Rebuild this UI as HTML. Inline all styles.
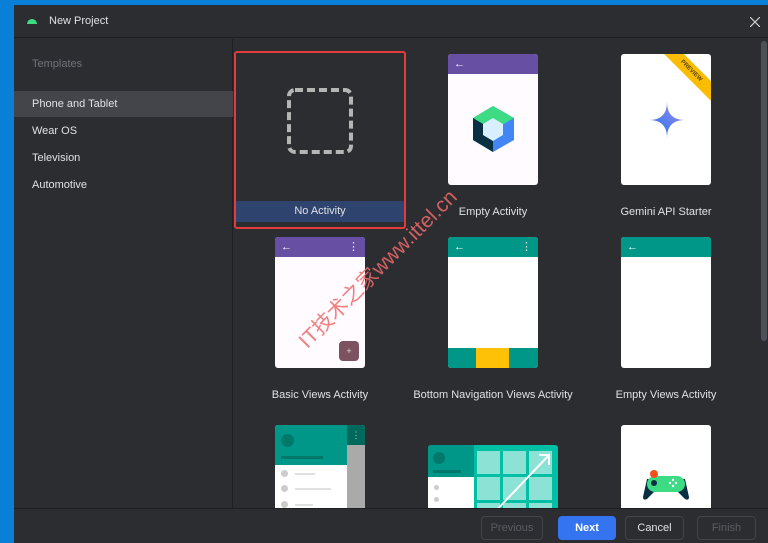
<!DOCTYPE html>
<html><head><meta charset="utf-8"><style>
*{margin:0;padding:0;box-sizing:border-box}
body{width:768px;height:543px;overflow:hidden;background:#0a7fd8;font-family:"Liberation Sans","Noto Sans CJK SC",sans-serif;position:relative}
.dlg{position:absolute;left:14px;top:5px;width:754px;height:538px;background:#2b2d30}
.title{position:absolute;left:0;top:0;width:754px;height:33px;border-bottom:1px solid #1e1f22;color:#dfe1e5;font-size:11px}
.left{position:absolute;left:0;top:34px;width:219px;height:469px;background:#2b2d30;border-right:1px solid #1e1f22}
.right{position:absolute;left:220px;top:34px;width:534px;height:469px;background:#2b2d30;overflow:hidden}
.it{position:absolute;left:18px;font-size:11px;color:#dfe1e5}
.lbl{position:absolute;font-size:11px;color:#dfe1e5;text-align:center;width:200px}
.card{position:absolute;background:#fff;border-radius:3px;overflow:hidden}
.bar{height:20px;position:relative}
.btn{position:absolute;top:511px;height:24px;border:1px solid #43454a;border-radius:4px;font-size:11px;text-align:center;line-height:22px}
</style></head><body>
<div class="dlg">
 <div class="title">
  <svg style="position:absolute;left:13px;top:12px" width="10" height="7"><path d="M0 7 A5 5 0 0 1 10 7Z" fill="#3ddc84"/></svg>
  <span style="position:absolute;left:35px;top:10px">New Project</span>
  <svg style="position:absolute;left:736px;top:12px" width="10" height="10"><path d="M0 0L10 10M10 0L0 10" stroke="#ccc" stroke-width="1.2"/></svg>
 </div>
 <div class="left">
  <div class="it" style="top:19px;color:#6f737a">Templates</div>
  <div style="position:absolute;left:0;top:52px;width:219px;height:26px;background:#43454a"></div>
  <div class="it" style="top:59px">Phone and Tablet</div>
  <div class="it" style="top:86px">Wear OS</div>
  <div class="it" style="top:113px">Television</div>
  <div class="it" style="top:140px">Automotive</div>
 </div>
 <div class="right">
  <div style="position:absolute;left:0;top:12px;width:172px;height:178px;border:2px solid #e23b3b;border-radius:3px">
   <svg style="position:absolute;left:50px;top:34px" width="68" height="68"><rect x="3" y="3" width="62" height="62" rx="6" fill="none" stroke="#b5b5b5" stroke-width="4" stroke-dasharray="8 4"/></svg>
   <div style="position:absolute;left:0;top:148px;width:168px;height:21px;background:#2e436e;color:#dfe1e5;font-size:11px;text-align:center;line-height:21px">No Activity</div>
  </div>
  <div class="card" style="left:214px;top:15px;width:90px;height:131px;background:#fffbff">
   <div class="bar" style="background:#6750a4;color:#fff;font-size:11px;padding-left:6px;line-height:20px">&#8592;</div>
   <svg style="position:absolute;left:25px;top:52px" width="41" height="46"><path d="M20 0L41 12V34L20 46L0 34V12Z" fill="#4285f4"/><path d="M20 0L41 12L20 24L0 12Z" fill="#3ddc84"/><path d="M0 12L20 24V46L0 34Z" fill="#083042"/><path d="M20 12L30 18V29L20 35L10 29V18Z" fill="#d7efff"/></svg>
  </div>
  <div class="lbl" style="left:159px;top:167px">Empty Activity</div>
  <div class="card" style="left:387px;top:15px;width:90px;height:131px">
   <div style="position:absolute;right:-20px;top:10px;width:80px;height:14px;background:#fbbc04;transform:rotate(45deg);font-size:6px;font-weight:bold;text-align:center;line-height:14px;color:#5a4300">PREVIEW</div>
   <svg style="position:absolute;left:28px;top:48px" width="36" height="36"><defs><linearGradient id="g" x1="0" y1="1" x2="1" y2="0"><stop offset="0" stop-color="#1a73e8"/><stop offset="1" stop-color="#a58cf0"/></linearGradient></defs><path d="M18 0Q18 18 36 18Q18 18 18 36Q18 18 0 18Q18 18 18 0Z" fill="url(#g)"/></svg>
  </div>
  <div class="lbl" style="left:332px;top:167px">Gemini API Starter</div>
  <div class="card" style="left:41px;top:198px;width:90px;height:131px;background:#fffbff">
   <div class="bar" style="background:#6750a4;color:#fff;font-size:11px;padding-left:6px;line-height:20px">&#8592;<span style="position:absolute;right:6px">&#8942;</span></div>
   <div style="position:absolute;left:64px;top:104px;width:20px;height:20px;border-radius:4px;background:#7d5260;color:#ddd;font-size:9px;text-align:center;line-height:20px">+</div>
  </div>
  <div class="lbl" style="left:-14px;top:350px">Basic Views Activity</div>
  <div class="card" style="left:214px;top:198px;width:90px;height:131px">
   <div class="bar" style="background:#009688;color:#fff;font-size:11px;padding-left:6px;line-height:20px">&#8592;<span style="position:absolute;right:6px">&#8942;</span></div>
   <div style="position:absolute;left:0;bottom:0;width:90px;height:20px;background:#009688"><div style="margin-left:28px;width:33px;height:20px;background:#ffc107"></div></div>
  </div>
  <div class="lbl" style="left:159px;top:350px">Bottom Navigation Views Activity</div>
  <div class="card" style="left:387px;top:198px;width:90px;height:131px">
   <div class="bar" style="background:#009688;color:#fff;font-size:11px;padding-left:6px;line-height:20px">&#8592;</div>
  </div>
  <div class="lbl" style="left:332px;top:350px">Empty Views Activity</div>
  <div class="card" style="left:41px;top:386px;width:90px;height:90px">
   <div style="position:absolute;left:0;top:0;width:72px;height:40px;background:#009688"><div style="position:absolute;left:6px;top:9px;width:13px;height:13px;border-radius:50%;background:#00796b"></div><div style="position:absolute;left:6px;top:31px;width:42px;height:3px;background:#00796b"></div></div>
   <div style="position:absolute;left:72px;top:0;width:18px;height:20px;background:#00695c;color:#ccc;font-size:9px;text-align:center;line-height:20px">&#8942;</div>
   <div style="position:absolute;left:72px;top:20px;width:18px;height:70px;background:#aaa"></div>
   <div style="position:absolute;left:6px;top:45px;width:7px;height:7px;border-radius:50%;background:#ccc"></div><div style="position:absolute;left:20px;top:48px;width:20px;height:2px;background:#e0e0e0"></div>
   <div style="position:absolute;left:6px;top:60px;width:7px;height:7px;border-radius:50%;background:#ccc"></div><div style="position:absolute;left:20px;top:63px;width:36px;height:2px;background:#e0e0e0"></div>
   <div style="position:absolute;left:6px;top:76px;width:7px;height:7px;border-radius:50%;background:#ccc"></div><div style="position:absolute;left:20px;top:79px;width:18px;height:2px;background:#e0e0e0"></div>
  </div>
  <div class="card" style="left:194px;top:406px;width:130px;height:70px;background:#00bfa5">
   <div style="position:absolute;left:0;top:0;width:46px;height:32px;background:#009688"><div style="position:absolute;left:5px;top:7px;width:12px;height:12px;border-radius:50%;background:#00796b"></div><div style="position:absolute;left:5px;top:25px;width:28px;height:3px;background:#00796b"></div></div>
   <div style="position:absolute;left:0;top:32px;width:46px;height:38px;background:#fff"><div style="position:absolute;left:6px;top:8px;width:5px;height:5px;border-radius:50%;background:#ccc"></div><div style="position:absolute;left:6px;top:20px;width:5px;height:5px;border-radius:50%;background:#ccc"></div><div style="position:absolute;left:6px;top:31px;width:5px;height:5px;border-radius:50%;background:#ccc"></div></div>
   <svg style="position:absolute;left:49px;top:6px" width="78" height="64"><g fill="#8ce3d5"><rect x="0" y="0" width="23" height="23"/><rect x="26" y="0" width="23" height="23"/><rect x="52" y="0" width="23" height="23"/><rect x="0" y="26" width="23" height="23"/><rect x="26" y="26" width="23" height="23"/><rect x="52" y="26" width="23" height="23"/><rect x="0" y="52" width="23" height="23"/><rect x="26" y="52" width="23" height="23"/><rect x="52" y="52" width="23" height="23"/></g><path d="M15 64L72 4M62 4H72V14" stroke="#fff" stroke-width="2" fill="none"/></svg>
  </div>
  <div class="card" style="left:387px;top:386px;width:90px;height:90px">
   <svg style="position:absolute;left:22px;top:44px" width="46" height="32"><path d="M4 10H42L46 28Q46 32 42 30L34 22H12L4 30Q0 32 0 28Z" fill="#083042"/><rect x="4" y="7" width="38" height="16" rx="8" fill="#3ddc84"/><circle cx="11" cy="14" r="3" fill="#083042"/><circle cx="11" cy="5" r="4" fill="#f4511e"/><g fill="#fff"><circle cx="30" cy="11" r="1.2"/><circle cx="30" cy="17" r="1.2"/><circle cx="27" cy="14" r="1.2"/><circle cx="33" cy="14" r="1.2"/></g></svg>
  </div>
  <div style="position:absolute;left:527px;top:2px;width:6px;height:300px;background:#4e5157;border-radius:3px"></div>
 </div>
 <div style="position:absolute;left:0;top:503px;width:754px;height:35px;background:#2b2d30;border-top:1px solid #1e1f22"></div>
 <div class="btn" style="left:467px;width:62px;color:#5a5d63">Previous</div>
 <div class="btn" style="left:544px;width:58px;background:#3574f0;border-color:#3574f0;color:#fff;font-weight:bold">Next</div>
 <div class="btn" style="left:611px;width:59px;color:#dfe1e5">Cancel</div>
 <div class="btn" style="left:683px;width:59px;color:#5a5d63">Finish</div>
 <div style="position:absolute;left:289px;top:328px;transform:rotate(-45deg);transform-origin:left center;color:#f06a6a;font-size:21px;line-height:24px;white-space:nowrap;opacity:.85">IT技术之家www.ittel.cn</div>
</div>
</body></html>
